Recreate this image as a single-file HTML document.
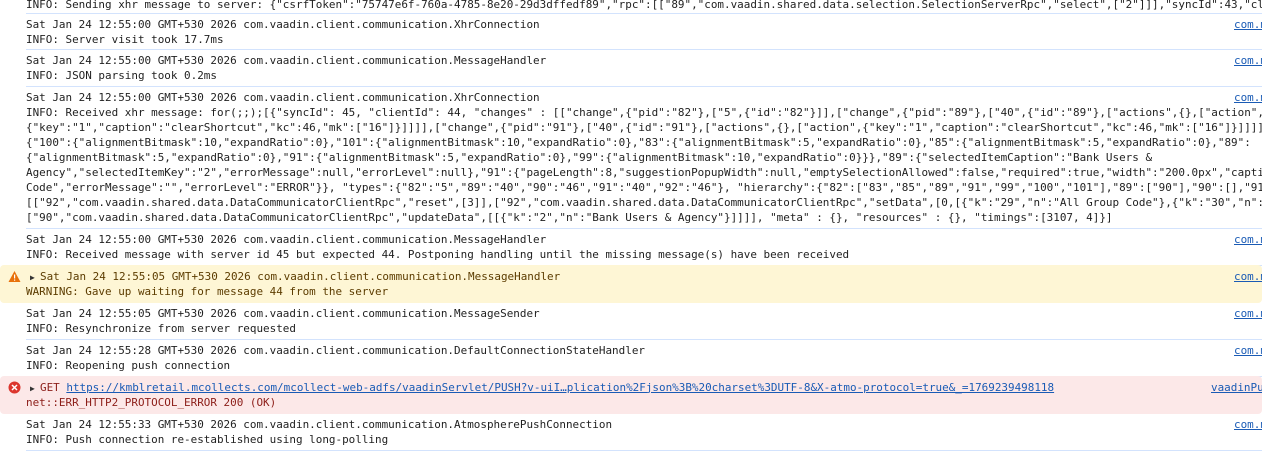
<!DOCTYPE html>
<html><head><meta charset="utf-8"><style>
html,body{margin:0;padding:0;background:#fff;width:1262px;height:454px;overflow:hidden}
body{font-family:"DejaVu Sans Mono","Liberation Mono",monospace;font-size:10.95px;color:#1f1f1f;position:relative}
.r{position:relative;border-bottom:1px solid #d3e3fd;padding:3px 0 2.9px 26px;margin-left:0}
.r.n{margin-left:26px;padding-left:0}
.l{height:15px;line-height:15px;white-space:pre;overflow:hidden}
.lk{position:absolute;right:0;top:3px;line-height:15px;color:#1a5bb5;text-decoration:underline;background:inherit;padding-left:4px;width:28px;overflow:hidden;white-space:pre}
.w{background:#fef6d5;border:none;border-radius:4px;margin-top:-1px;padding-top:4px;padding-bottom:3.9px;color:#5c3c00}
.e{background:#fce8e8;border:none;border-radius:4px;margin-top:-1px;padding-top:4px;padding-bottom:3.9px;color:#8c1d18}
.w .lk,.e .lk{top:4px}
.ic{position:absolute;left:8px;top:5px;width:13px;height:13px}
.tri{display:inline-block;font-size:8px;color:#333;width:10px;margin-left:4px;vertical-align:0px}
a{color:#1a5bb5;text-decoration:underline}
</style></head><body>
<div class="r n" style="padding-top:0;padding-bottom:0;height:15.5px"><div class="l" style="margin-top:-3px">INFO: Sending xhr message to server: {"csrfToken":"75747e6f-760a-4785-8e20-29d3dffedf89","rpc":[["89","com.vaadin.shared.data.selection.SelectionServerRpc","select",["2"]]],"syncId":43,"clientId":43}]</div></div>
<div class="r n" style="background:#fff"><div class="l">Sat Jan 24 12:55:00 GMT+530 2026 com.vaadin.client.communication.XhrConnection</div><div class="l">INFO: Server visit took 17.7ms</div><span class="lk" style="background:#fff">com.m</span></div>
<div class="r n" style="background:#fff"><div class="l">Sat Jan 24 12:55:00 GMT+530 2026 com.vaadin.client.communication.MessageHandler</div><div class="l">INFO: JSON parsing took 0.2ms</div><span class="lk" style="background:#fff">com.m</span></div>
<div class="r n" style="background:#fff"><div class="l">Sat Jan 24 12:55:00 GMT+530 2026 com.vaadin.client.communication.XhrConnection</div>
<div class="l">INFO: Received xhr message: for(;;);[{"syncId": 45, "clientId": 44, "changes" : [["change",{"pid":"82"},["5",{"id":"82"}]],["change",{"pid":"89"},["40",{"id":"89"},["actions",{},["action",</div>
<div class="l">{"key":"1","caption":"clearShortcut","kc":46,"mk":["16"]}]]]],["change",{"pid":"91"},["40",{"id":"91"},["actions",{},["action",{"key":"1","caption":"clearShortcut","kc":46,"mk":["16"]}]]]]</div>
<div class="l">{"100":{"alignmentBitmask":10,"expandRatio":0},"101":{"alignmentBitmask":10,"expandRatio":0},"83":{"alignmentBitmask":5,"expandRatio":0},"85":{"alignmentBitmask":5,"expandRatio":0},"89":</div>
<div class="l">{"alignmentBitmask":5,"expandRatio":0},"91":{"alignmentBitmask":5,"expandRatio":0},"99":{"alignmentBitmask":10,"expandRatio":0}}},"89":{"selectedItemCaption":"Bank Users &amp;</div>
<div class="l">Agency","selectedItemKey":"2","errorMessage":null,"errorLevel":null},"91":{"pageLength":8,"suggestionPopupWidth":null,"emptySelectionAllowed":false,"required":true,"width":"200.0px","capti</div>
<div class="l">Code","errorMessage":"","errorLevel":"ERROR"}}, "types":{"82":"5","89":"40","90":"46","91":"40","92":"46"}, "hierarchy":{"82":["83","85","89","91","99","100","101"],"89":["90"],"90":[],"91</div>
<div class="l">[["92","com.vaadin.shared.data.DataCommunicatorClientRpc","reset",[3]],["92","com.vaadin.shared.data.DataCommunicatorClientRpc","setData",[0,[{"k":"29","n":"All Group Code"},{"k":"30","n":</div>
<div class="l">["90","com.vaadin.shared.data.DataCommunicatorClientRpc","updateData",[[{"k":"2","n":"Bank Users &amp; Agency"}]]]], "meta" : {}, "resources" : {}, "timings":[3107, 4]}]</div>
<span class="lk" style="background:#fff">com.m</span></div>
<div class="r n" style="background:#fff"><div class="l">Sat Jan 24 12:55:00 GMT+530 2026 com.vaadin.client.communication.MessageHandler</div><div class="l">INFO: Received message with server id 45 but expected 44. Postponing handling until the missing message(s) have been received</div><span class="lk" style="background:#fff">com.m</span></div>
<div class="r w"><svg class="ic" viewBox="0 0 13 13"><path d="M6.5 1 L12.5 12 L0.5 12 Z" fill="#e8710a"/><rect x="6" y="4.5" width="1.2" height="4" fill="#fff"/><rect x="6" y="9.5" width="1.2" height="1.2" fill="#fff"/></svg><div class="l"><span class="tri">▶</span>Sat Jan 24 12:55:05 GMT+530 2026 com.vaadin.client.communication.MessageHandler</div><div class="l">WARNING: Gave up waiting for message 44 from the server</div><span class="lk">com.m</span></div>
<div class="r n" style="background:#fff"><div class="l">Sat Jan 24 12:55:05 GMT+530 2026 com.vaadin.client.communication.MessageSender</div><div class="l">INFO: Resynchronize from server requested</div><span class="lk" style="background:#fff">com.m</span></div>
<div class="r n" style="background:#fff"><div class="l">Sat Jan 24 12:55:28 GMT+530 2026 com.vaadin.client.communication.DefaultConnectionStateHandler</div><div class="l">INFO: Reopening push connection</div><span class="lk" style="background:#fff">com.m</span></div>
<div class="r e"><svg class="ic" viewBox="0 0 13 13"><circle cx="6.5" cy="6.5" r="6" fill="#dc362e"/><path d="M4 4 L9 9 M9 4 L4 9" stroke="#fff" stroke-width="1.5"/></svg><div class="l"><span class="tri">▶</span>GET <a>https://kmblretail.mcollects.com/mcollect-web-adfs/vaadinServlet/PUSH?v-uiI…plication%2Fjson%3B%20charset%3DUTF-8&amp;X-atmo-protocol=true&amp;_=1769239498118</a></div><div class="l">net::ERR_HTTP2_PROTOCOL_ERROR 200 (OK)</div><span class="lk" style="width:51px">vaadinPu</span></div>
<div class="r n" style="background:#fff"><div class="l">Sat Jan 24 12:55:33 GMT+530 2026 com.vaadin.client.communication.AtmospherePushConnection</div><div class="l">INFO: Push connection re-established using long-polling</div><span class="lk" style="background:#fff">com.m</span></div>
</body></html>
